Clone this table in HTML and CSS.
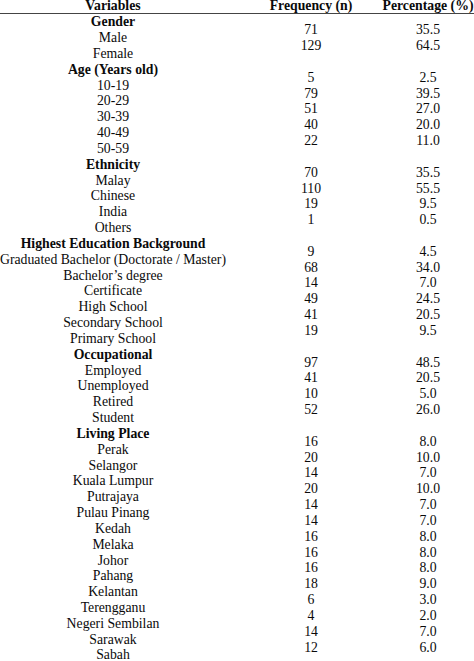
FILE: index.html
```html
<!DOCTYPE html>
<html>
<head>
<meta charset="utf-8">
<link rel="stylesheet" href="styles.css">
</head>
<body>
<div class="table">
  <div class="head">
    <div class="c1">Variables</div>
    <div class="c2">Frequency (n)</div>
    <div class="c3">Percentage (%)</div>
  </div>
  <div class="body">
    <div class="c1 col">
      <div class="b">Gender</div>
      <div>Male</div>
      <div>Female</div>
      <div class="b">Age (Years old)</div>
      <div>10-19</div>
      <div>20-29</div>
      <div>30-39</div>
      <div>40-49</div>
      <div>50-59</div>
      <div class="b">Ethnicity</div>
      <div>Malay</div>
      <div>Chinese</div>
      <div>India</div>
      <div>Others</div>
      <div class="b">Highest Education Background</div>
      <div>Graduated Bachelor (Doctorate / Master)</div>
      <div>Bachelor’s degree</div>
      <div>Certificate</div>
      <div>High School</div>
      <div>Secondary School</div>
      <div>Primary School</div>
      <div class="b">Occupational</div>
      <div>Employed</div>
      <div>Unemployed</div>
      <div>Retired</div>
      <div>Student</div>
      <div class="b">Living Place</div>
      <div>Perak</div>
      <div>Selangor</div>
      <div>Kuala Lumpur</div>
      <div>Putrajaya</div>
      <div>Pulau Pinang</div>
      <div>Kedah</div>
      <div>Melaka</div>
      <div>Johor</div>
      <div>Pahang</div>
      <div>Kelantan</div>
      <div>Terengganu</div>
      <div>Negeri Sembilan</div>
      <div>Sarawak</div>
      <div>Sabah</div>
    </div>
    <div class="c2 col shift">
      <div>71</div><div>129</div><div class="blank"></div>
      <div>5</div><div>79</div><div>51</div><div>40</div><div>22</div><div class="blank"></div>
      <div>70</div><div>110</div><div>19</div><div>1</div><div class="blank"></div>
      <div>9</div><div>68</div><div>14</div><div>49</div><div>41</div><div>19</div><div class="blank"></div>
      <div>97</div><div>41</div><div>10</div><div>52</div><div class="blank"></div>
      <div>16</div><div>20</div><div>14</div><div>20</div><div>14</div><div>14</div><div>16</div><div>16</div><div>16</div><div>18</div><div>6</div><div>4</div><div>14</div><div>12</div>
    </div>
    <div class="c3 col shift">
      <div>35.5</div><div>64.5</div><div class="blank"></div>
      <div>2.5</div><div>39.5</div><div>27.0</div><div>20.0</div><div>11.0</div><div class="blank"></div>
      <div>35.5</div><div>55.5</div><div>9.5</div><div>0.5</div><div class="blank"></div>
      <div>4.5</div><div>34.0</div><div>7.0</div><div>24.5</div><div>20.5</div><div>9.5</div><div class="blank"></div>
      <div>48.5</div><div>20.5</div><div>5.0</div><div>26.0</div><div class="blank"></div>
      <div>8.0</div><div>10.0</div><div>7.0</div><div>10.0</div><div>7.0</div><div>7.0</div><div>8.0</div><div>8.0</div><div>8.0</div><div>9.0</div><div>3.0</div><div>2.0</div><div>7.0</div><div>6.0</div>
    </div>
  </div>
</div>
</body>
</html>
```
FILE: styles.css
```css
html, body {
  margin: 0;
  padding: 0;
  background: #fff;
  overflow: hidden;
}
.table {
  width: 474px;
  font-family: "Liberation Serif", "Times New Roman", serif;
  font-size: 13.75px;
  line-height: 15.84px;
  color: #0a0a0a;
}
.head, .body {
  display: grid;
  grid-template-columns: 226px 146px 102px;
}
.head {
  margin-top: -2.5px;
  border-bottom: 1px solid #444;
  font-weight: bold;
  white-space: nowrap;
}
.c1, .c2, .c3 {
  text-align: center;
  white-space: nowrap;
}
.c2 {
  padding-left: 24px;
}
.c3 {
  padding-left: 10px;
}
.head .c3 {
  display: flex;
  justify-content: center;
}
.col {
  display: flex;
  flex-direction: column;
}
.col > div {
  height: 15.84px;
}
.shift {
  padding-top: 7.9px;
}
.b {
  font-weight: bold;
}
```
